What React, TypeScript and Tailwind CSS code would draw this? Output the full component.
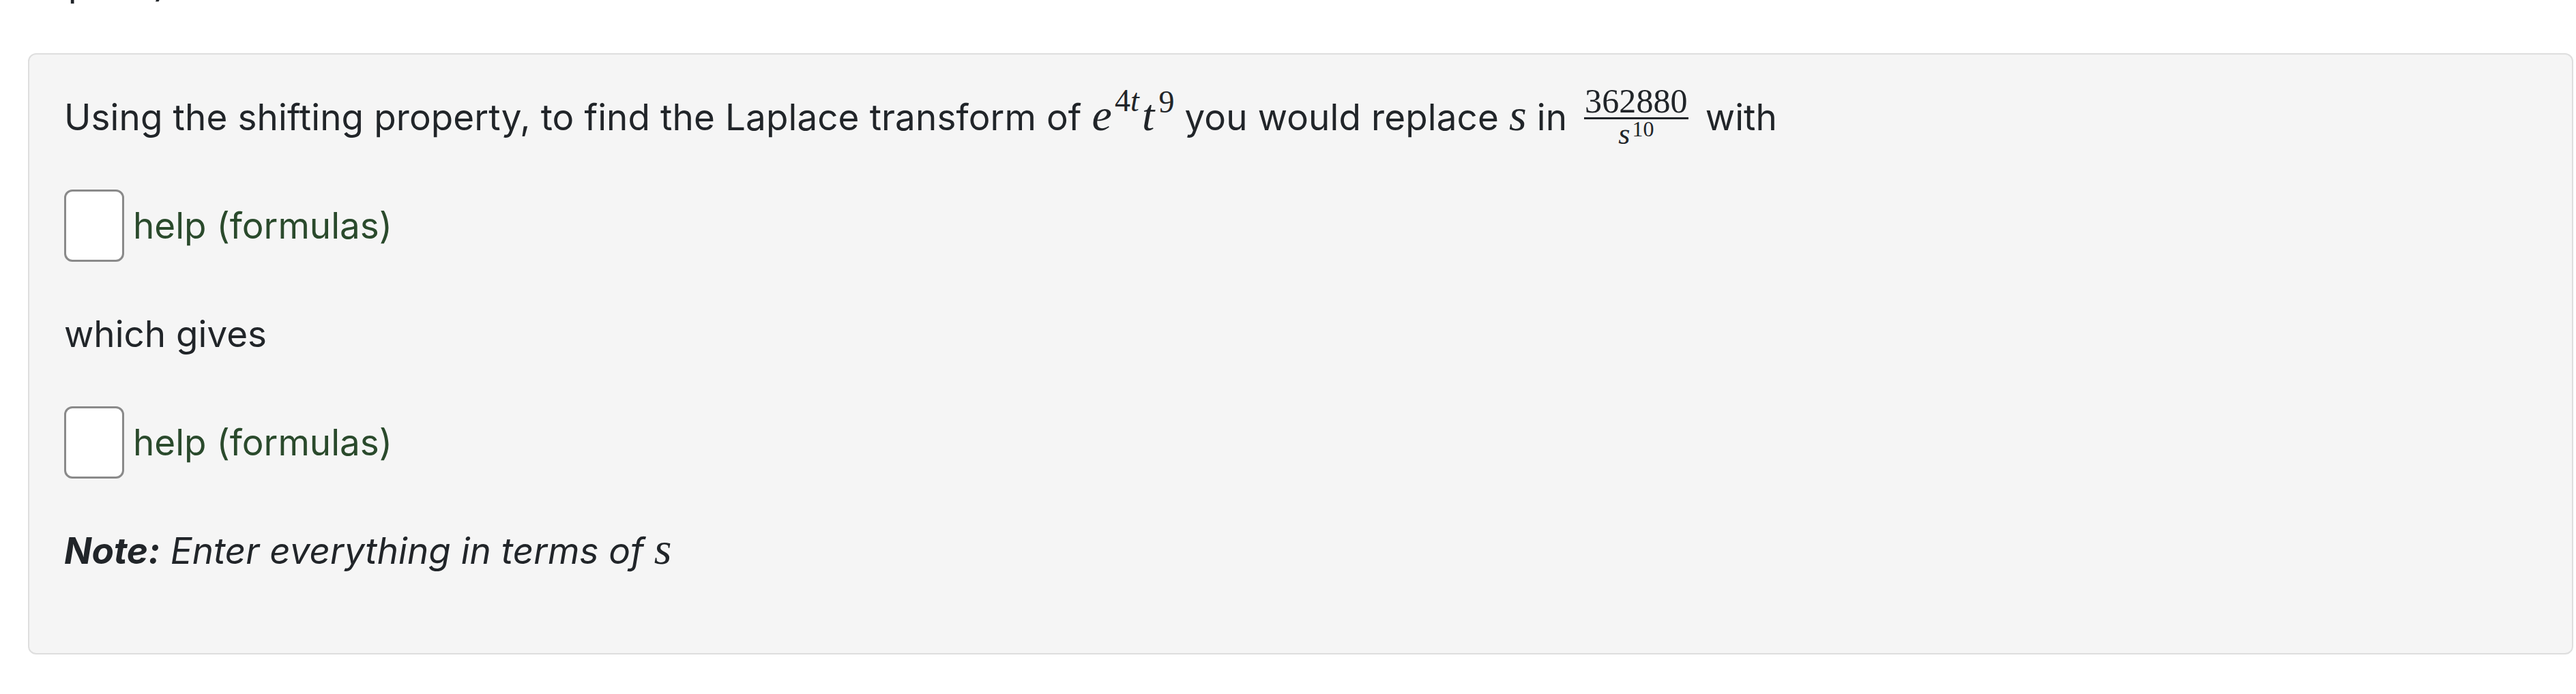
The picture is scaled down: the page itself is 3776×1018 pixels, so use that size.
import React from "react";

const SANS = "font-[Inter,'Liberation_Sans',sans-serif]";

// math letters in a serif italic, like the MathJax output
const Mi = ({ children }: { children: React.ReactNode }) => (
  <span className="font-['Liberation_Serif',serif] italic text-[66px] leading-[0]">{children}</span>
);

const Sup = ({ children, raise }: { children: React.ReactNode; raise: string }) => (
  <span className={`font-['Liberation_Serif',serif] text-[46px] leading-[0] ${raise}`}>{children}</span>
);

const Fraction = () => (
  <span className="inline-flex flex-col items-center align-[26px] mx-[9px] px-[1px] font-['Liberation_Serif',serif]">
    <span className="text-[50px] leading-[34px] px-[1px]">362880</span>
    <span className="mt-[7px] block h-[3px] w-full bg-[#212529]" />
    <span className="mt-[8px] text-[44px] leading-[28px]">
      <span className="italic">s</span>
      <span className="text-[32px] leading-[0] align-[11px] ml-[3px]">10</span>
    </span>
  </span>
);

const AnswerRow = () => (
  <div className="flex items-center">
    <div className="w-[88px] h-[106px] rounded-[12px] border-[3px] border-[#8a8a8a] bg-white" />
    <span className="ml-[13px] text-[#2a4a2c]">help (formulas)</span>
  </div>
);

export default function App() {
  return (
    <div className={`w-full h-[1018px] overflow-hidden bg-white text-[#212529] ${SANS}`}>
      <div className="-mt-[54px] h-[60px] pl-[44px] text-[53px] leading-[60px]">(1 point)</div>
      <div className="mt-[72px] ml-[41px] mr-[4px] h-[882px] rounded-[12px] border-2 border-[#dedede] bg-[#f5f5f5] pl-[51px] pt-[51px]">
        <div className="flex flex-col gap-[66px] text-[53px] leading-[80px]">
          <p className="tracking-[0.1px]">
            Using the shifting property, to find the Laplace transform of{" "}
            <Mi>e</Mi>
            <Sup raise="align-[28px] ml-[4px]">
              4<span className="italic">t</span>
            </Sup>
            <Mi>
              <span className="ml-[4px]">t</span>
            </Mi>
            <Sup raise="align-[26px] ml-[6px]">9</Sup> you would replace <Mi>s</Mi> in <Fraction /> with
          </p>
          <AnswerRow />
          <p>which gives</p>
          <AnswerRow />
          <p>
            <b className="font-bold italic">Note:</b>{" "}
            <i>
              Enter everything in terms of <Mi>s</Mi>
            </i>
          </p>
        </div>
      </div>
    </div>
  );
}
